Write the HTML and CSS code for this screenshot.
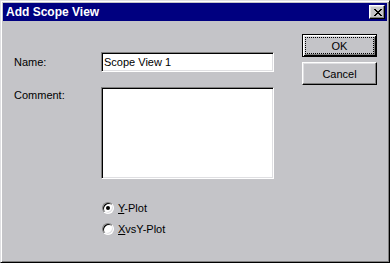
FILE: index.html
```html
<!DOCTYPE html>
<html lang="en">
<head>
  <meta charset="UTF-8" />
  <meta name="viewport" content="width=device-width, initial-scale=1.0"/>
  <link rel="stylesheet" href="styles.css">
</head>
<body>

  <div class="window">
    <div class="titlebar">
      <span class="title">Add Scope View</span>
      <div class="close">
        <svg width="8" height="7" viewBox="0 0 8 7" shape-rendering="crispEdges">
          <path d="M0 0h2v1H0zM6 0h2v1H6zM1 1h2v1H1zM5 1h2v1H5zM2 2h4v1H2zM3 3h2v1H3zM2 4h4v1H2zM1 5h2v1H1zM5 5h2v1H5zM0 6h2v1H0zM6 6h2v1H6z" fill="#000"/>
        </svg>
      </div>
    </div>

    <div class="content">
      <div class="form">
        <label class="label label-name">Name:</label>
        <input class="field" type="text" value="Scope View 1">

        <label class="label label-comment">Comment:</label>
        <textarea class="field area"></textarea>

        <div class="radios">
          <div class="radio">
            <span class="radio-box checked"></span>
            <span><u>Y</u>-Plot</span>
          </div>
          <div class="radio">
            <span class="radio-box"></span>
            <span><u>X</u>vsY-Plot</span>
          </div>
        </div>
      </div>

      <div class="buttons">
        <div class="btn btn-default"><span class="focus">OK</span></div>
        <div class="btn">Cancel</div>
      </div>
    </div>
  </div>

</body>
</html>
```

FILE: styles.css
```css
* {
  margin: 0;
  padding: 0;
  box-sizing: border-box;
}

html, body {
  width: 100%;
  height: 100%;
  overflow: hidden;
  background: #c4c4c8;
  font-family: "Liberation Sans", Arial, sans-serif;
  font-size: 11px;
  color: #000;
}

.window {
  width: 390px;
  height: 263px;
  background: #c4c4c8;
  border: 1px solid;
  border-color: #dfdfe2 #000 #000 #dfdfe2;
  box-shadow: inset 1px 1px #fff, inset -1px -1px #808080;
  padding: 2px;
  display: flex;
  flex-direction: column;
}

.titlebar {
  height: 18px;
  background: #000080;
  display: flex;
  align-items: center;
  justify-content: space-between;
  padding: 0 2px 0 3px;
}

.title {
  color: #fff;
  font-weight: bold;
  font-size: 12px;
}

.close {
  width: 16px;
  height: 14px;
  background: #c4c4c8;
  border: 1px solid;
  border-color: #fff #000 #000 #fff;
  box-shadow: inset -1px -1px #808080, inset 1px 1px #dfdfe2;
  display: flex;
  align-items: center;
  justify-content: center;
  padding-left: 1px;
}

.content {
  flex: 1;
  display: flex;
}

.form {
  margin-left: 11px;
  padding-top: 31px;
  display: grid;
  grid-template-columns: 87px 173px;
  row-gap: 15px;
  align-content: start;
}

.label-name {
  align-self: center;
}

.label-comment {
  padding-top: 2px;
}

.field {
  font-family: "Liberation Sans", Arial, sans-serif;
  font-size: 11px;
  color: #000;
  height: 20px;
  background: #fff;
  border: 1px solid;
  border-color: #808080 #fff #fff #808080;
  box-shadow: inset 1px 1px #000, inset -1px -1px #dfdfe2;
  padding: 0 2px;
  outline: none;
}

.area {
  height: 92px;
  resize: none;
}

.radios {
  grid-column: 2;
  margin-top: 3px;
  margin-left: 1px;
  display: flex;
  flex-direction: column;
}

.radio {
  height: 21px;
  display: flex;
  align-items: center;
  gap: 4px;
}

.radio-box {
  width: 12px;
  height: 12px;
  border-radius: 50%;
  background: #fff;
  border: 1px solid;
  border-color: #808080 #fff #fff #808080;
  box-shadow: inset 1px 1px #000, inset -1px -1px #dfdfe2;
  display: flex;
  align-items: center;
  justify-content: center;
}

.radio-box.checked::after {
  content: "";
  width: 4px;
  height: 4px;
  border-radius: 50%;
  background: #000;
}

.buttons {
  margin-left: auto;
  margin-right: 10px;
  padding-top: 13px;
  display: flex;
  flex-direction: column;
  gap: 5px;
}

.btn {
  width: 75px;
  height: 23px;
  background: #c4c4c8;
  border: 1px solid;
  border-color: #fff #000 #000 #fff;
  box-shadow: inset -1px -1px #808080, inset 1px 1px #dfdfe2;
  display: flex;
  align-items: center;
  justify-content: center;
}

.btn-default {
  border-color: #000;
  box-shadow: inset 1px 1px #fff, inset -1px -1px #000, inset 2px 2px #dfdfe2, inset -2px -2px #808080;
  padding: 2px;
  align-items: stretch;
}

.focus {
  flex: 1;
  border: 1px dotted #000;
  display: flex;
  align-items: center;
  justify-content: center;
}
```
